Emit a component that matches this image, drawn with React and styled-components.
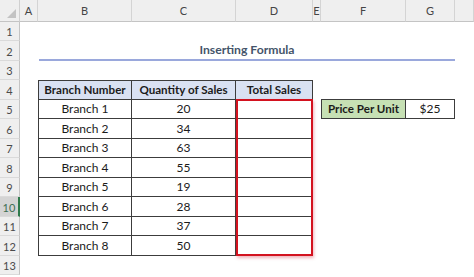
import React from "react";
import styled, { createGlobalStyle } from "styled-components";

const GlobalStyle = createGlobalStyle`
  html, body {
    margin: 0;
    padding: 0;
    background: #ffffff;
  }
  body {
    font-family: Lato, "Liberation Sans", sans-serif;
    overflow: hidden;
  }
`;

const columns = ["A", "B", "C", "D", "E", "F", "G", ""];
const rowCount = 13;
const selectedRow = 10;

const branches = [
  ["Branch 1", 20],
  ["Branch 2", 34],
  ["Branch 3", 63],
  ["Branch 4", 55],
  ["Branch 5", 19],
  ["Branch 6", 28],
  ["Branch 7", 37],
  ["Branch 8", 50],
];

const App = () => {
  return (
    <>
      <GlobalStyle />
      <Sheet>
        <Corner>
          <CornerMark />
        </Corner>
        {columns.map((c, i) => (
          <ColHead key={i} $col={i + 2}>
            {c}
          </ColHead>
        ))}
        {Array.from({ length: rowCount }, (_, i) => (
          <RowHead key={i} $row={i + 2} $selected={i + 1 === selectedRow}>
            {i + 1}
          </RowHead>
        ))}

        <Title>Inserting Formula</Title>

        <HeadCell $col={3} $row={5} $first>
          Branch Number
        </HeadCell>
        <HeadCell $col={4} $row={5}>
          Quantity of Sales
        </HeadCell>
        <HeadCell $col={5} $row={5}>
          Total Sales
        </HeadCell>

        {branches.map(([name, qty], i) => (
          <React.Fragment key={name}>
            <Cell $col={3} $row={i + 6} $first>
              {name}
            </Cell>
            <Cell $col={4} $row={i + 6}>
              {qty}
            </Cell>
            <Cell $col={5} $row={i + 6} />
          </React.Fragment>
        ))}

        <Selection />

        <PriceLabel>Price Per Unit</PriceLabel>
        <PriceValue>$25</PriceValue>
      </Sheet>
    </>
  );
};

const Sheet = styled.div`
  display: grid;
  grid-template-columns: 20px 18px 94px 104px 77px 8px 85px 49px 1fr;
  grid-template-rows: 21.5px repeat(${rowCount}, 19.5px) 1fr;
  width: 474px;
  height: 277px;
  background: #ffffff;
  color: #1b1b1b;
`;

const Corner = styled.div`
  grid-column: 1;
  grid-row: 1;
  position: relative;
  background: #efefef;
  border-right: 1px solid #d0d0d0;
  border-bottom: 1px solid #c4c4c4;
`;

const CornerMark = styled.div`
  position: absolute;
  right: 3px;
  bottom: 3px;
  width: 0;
  height: 0;
  border-left: 9px solid transparent;
  border-bottom: 9px solid #c3c3c3;
`;

const ColHead = styled.div`
  grid-column: ${(p) => p.$col};
  grid-row: 1;
  display: flex;
  align-items: center;
  justify-content: center;
  background: #efefef;
  border-right: 1px solid #d4d4d4;
  border-bottom: 1px solid #c4c4c4;
  font-size: 11px;
  color: #454545;
`;

const RowHead = styled.div`
  grid-column: 1;
  grid-row: ${(p) => p.$row};
  display: flex;
  align-items: center;
  justify-content: center;
  padding-top: 2px;
  box-sizing: border-box;
  background: ${(p) => (p.$selected ? "#d4d4d4" : "#efefef")};
  border-right: ${(p) =>
    p.$selected ? "2px solid #2f7a4c" : "1px solid #c4c4c4"};
  border-bottom: 1px solid #dadada;
  font-size: 11px;
  color: ${(p) => (p.$selected ? "#3d6e52" : "#4a4a4a")};
`;

const Title = styled.div`
  grid-column: 3 / 9;
  grid-row: 3;
  margin-left: 1px;
  display: flex;
  align-items: center;
  justify-content: center;
  border-bottom: 2px solid #9aa8dc;
  font-size: 12.2px;
  font-weight: 700;
  color: #44546a;
`;

const Cell = styled.div`
  grid-column: ${(p) => p.$col};
  grid-row: ${(p) => p.$row};
  display: flex;
  align-items: center;
  justify-content: center;
  box-sizing: border-box;
  border-right: 1px solid #3c3c3c;
  border-bottom: 1px solid #3c3c3c;
  border-left: ${(p) => (p.$first ? "1px solid #3c3c3c" : "none")};
  font-size: 12px;
`;

const HeadCell = styled(Cell)`
  border-top: 1px solid #3c3c3c;
  background: #d9e1f2;
  font-weight: 700;
  font-size: 11.6px;
`;

const Selection = styled.div`
  grid-column: 5;
  grid-row: 6 / 14;
  margin: -1px 0 0 0;
  border: 2px solid #d3121f;
  box-shadow: 1px 2px 3px rgba(210, 40, 60, 0.35);
  pointer-events: none;
`;

const PriceLabel = styled.div`
  grid-column: 7;
  grid-row: 6;
  display: flex;
  align-items: center;
  justify-content: center;
  margin-top: -1px;
  background: #c6e0b4;
  border: 1px solid #3c3c3c;
  font-size: 11.6px;
  font-weight: 700;
`;

const PriceValue = styled.div`
  grid-column: 8;
  grid-row: 6;
  display: flex;
  align-items: center;
  justify-content: center;
  margin-top: -1px;
  border: 1px solid #3c3c3c;
  border-left: none;
  font-size: 12px;
`;

export default App;
